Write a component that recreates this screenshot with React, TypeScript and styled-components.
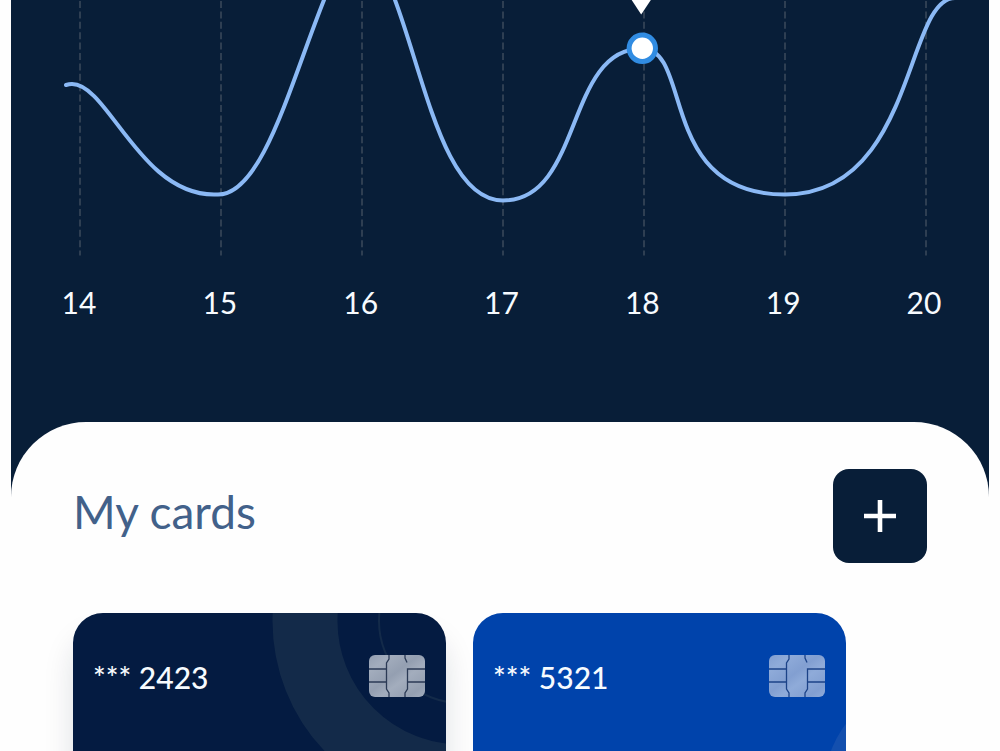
import React from "react";
import styled, { createGlobalStyle } from "styled-components";

const GlobalStyle = createGlobalStyle`
  *, *::before, *::after { box-sizing: border-box; }
  body {
    margin: 0;
    background: #fefefe;
    font-family: Lato, "Open Sans", sans-serif;
  }
`;

const Page = styled.main`
  height: 100vh;
  overflow: hidden;
  padding: 0 11px;
`;

const Screen = styled.div`
  min-height: 100%;
  display: flex;
  flex-direction: column;
  background: #081e38;
`;

const ChartSection = styled.section`
  padding-bottom: 100px;
`;

const Chart = styled.svg`
  display: block;
  width: 100%;
  height: auto;
`;

const Days = styled.ol`
  display: flex;
  justify-content: space-between;
  margin: 26px 0 0;
  padding: 0 47px 0 50px;
  list-style: none;
`;

const Day = styled.li`
  width: 36px;
  display: flex;
  justify-content: center;
  color: #f7fbff;
  font-size: 30px;
  line-height: 40px;
`;

const Sheet = styled.section`
  flex: 1;
  padding: 47px 62px 40px;
  border-radius: 75px 75px 0 0;
  background: #fefefe;
`;

const SheetHeader = styled.header`
  display: flex;
  align-items: center;
  justify-content: space-between;
`;

const Title = styled.h2`
  margin: 0;
  padding-bottom: 8px;
  color: #42618a;
  font-size: 46px;
  font-weight: 400;
  line-height: 56px;
`;

const AddButton = styled.button`
  display: flex;
  align-items: center;
  justify-content: center;
  width: 94px;
  height: 94px;
  padding: 0;
  border: 0;
  border-radius: 16px;
  background: #081e38;
  cursor: pointer;
`;

const CardList = styled.div`
  display: flex;
  gap: 27px;
  margin-top: 50px;
`;

const Card = styled.article<{ $color: string; $raised?: boolean }>`
  position: relative;
  flex: none;
  display: flex;
  align-items: flex-start;
  justify-content: space-between;
  width: 373px;
  height: 236px;
  padding: 42px 21px 0 20px;
  border-radius: 30px;
  overflow: hidden;
  background: ${(p) => p.$color};
  box-shadow: ${(p) => (p.$raised ? "0 24px 30px rgba(8, 30, 56, 0.13)" : "none")};
`;

const CardArt = styled.svg`
  position: absolute;
  inset: 0;
  width: 100%;
  height: 100%;
`;

const CardNumber = styled.span`
  position: relative;
  color: #f7fbff;
  font-size: 30px;
  font-weight: 500;
  line-height: 44px;
`;

const ChipIcon = styled.svg`
  position: relative;
  display: block;
  width: 56px;
  height: 42px;
`;

const days = [14, 15, 16, 17, 18, 19, 20];

function Chip({ id, light, dark, line }: { id: string; light: string; dark: string; line: string }) {
  return (
    <ChipIcon viewBox="0 0 56 42" aria-hidden="true">
      <defs>
        <linearGradient id={id} x1="0" y1="0" x2="1" y2="1">
          <stop offset="0" stopColor={dark} />
          <stop offset="0.2" stopColor={light} />
          <stop offset="0.45" stopColor={dark} />
          <stop offset="0.6" stopColor={light} />
          <stop offset="0.85" stopColor={dark} />
          <stop offset="1" stopColor={light} />
        </linearGradient>
      </defs>
      <rect width="56" height="42" rx="6" fill={`url(#${id})`} />
      <g fill="none" stroke={line} strokeWidth="1.3">
        <path d="M20 0V4L17.500 8V34L20 38V42" />
        <path d="M36 0V3L38 7.500" />
        <path d="M56 14H38.500V34L36 38V42" />
        <path d="M0 14H17.500M0 27H17.500M38.500 27H56" />
      </g>
    </ChipIcon>
  );
}

export default function App() {
  return (
    <>
      <GlobalStyle />
      <Page>
        <Screen>
          <ChartSection aria-label="Daily activity">
            <Chart viewBox="11 0 978 256" role="img" aria-label="Line chart for days 14 to 20">
              <g stroke="#334356" strokeWidth="1.8" strokeDasharray="7 3.4">
                {days.map((day, i) => (
                  <line key={day} x1={80 + i * 141} x2={80 + i * 141} y1="-9.4" y2="255.5" />
                ))}
              </g>
              <path
                d="M66 85Q69 84 72 84C108 84 140 194.500 214 194.500H218C262 194.500 290 85 324 0C340 -40 375 -50 395 0C425 80 445 200.500 503 200.500C583 200.500 565 48.500 642 48.500C693 48.500 657 194.500 785 194.500C915 194.500 905 -2 955 -2"
                fill="none"
                stroke="#8bb9f5"
                strokeWidth="4"
                strokeLinecap="round"
              />
              <path d="M631 -1H651.500L641.200 14.500Z" fill="#fff" />
              <circle cx="642.300" cy="48.300" r="13.200" fill="#fff" stroke="#318ce2" strokeWidth="5" />
            </Chart>
            <Days>
              {days.map((day) => (
                <Day key={day}>{day}</Day>
              ))}
            </Days>
          </ChartSection>
          <Sheet>
            <SheetHeader>
              <Title>My cards</Title>
              <AddButton type="button" aria-label="Add card">
                <svg width="32" height="32" viewBox="0 0 32 32" aria-hidden="true">
                  <path d="M16 0V32M0 16H32" stroke="#fff" strokeWidth="4.600" />
                </svg>
              </AddButton>
            </SheetHeader>
            <CardList>
              <Card $color="#041b41" $raised>
                <CardArt viewBox="0 0 373 236" aria-hidden="true">
                  <circle cx="388" cy="8" r="156" fill="none" stroke="#132a49" strokeWidth="65" />
                  <circle cx="388" cy="8" r="82" fill="none" stroke="#132a49" strokeWidth="2" />
                </CardArt>
                <CardNumber>*** 2423</CardNumber>
                <Chip id="chip-navy" light="#a3adbd" dark="#949fb1" line="#2b3a55" />
              </Card>
              <Card $color="#0043ab">
                <CardArt viewBox="0 0 373 236" aria-hidden="true">
                  <circle cx="452" cy="172" r="100" fill="#134fae" />
                </CardArt>
                <CardNumber>*** 5321</CardNumber>
                <Chip id="chip-blue" light="#8fabd9" dark="#829fd1" line="#1c4388" />
              </Card>
            </CardList>
          </Sheet>
        </Screen>
      </Page>
    </>
  );
}
